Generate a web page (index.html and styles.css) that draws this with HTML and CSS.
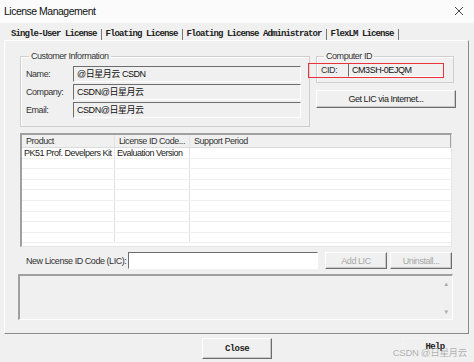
FILE: index.html
```html
<!DOCTYPE html>
<html lang="en">
    <head>
        <meta charset="UTF-8">
        <meta name="viewport" content="width=device-width, initial-scale=1.0">
        <title>License Management</title>
        <link rel="stylesheet" href="styles.css">
    </head>
    <body>
        <div class="window">
            <div class="titlebar">
                <span class="title">License Management</span>
                <svg class="close-x" width="10" height="10" viewBox="0 0 10 10">
                    <path d="M1 1 L9 9 M9 1 L1 9" stroke="#444" stroke-width="1" fill="none"/>
                </svg>
            </div>

            <div class="tabs">
                <span class="tab active">Single-User License</span>
                <span class="tab">Floating License</span>
                <span class="tab">Floating License Administrator</span>
                <span class="tab">FlexLM License</span>
            </div>

            <div class="panel">
                <div class="top-row">
                    <fieldset class="group customer">
                        <legend>Customer Information</legend>
                        <div class="form-grid">
                            <span class="label">Name:</span>
                            <div class="field">@日星月云 CSDN</div>
                            <span class="label">Company:</span>
                            <div class="field">CSDN@日星月云</div>
                            <span class="label">Email:</span>
                            <div class="field">CSDN@日星月云</div>
                        </div>
                    </fieldset>

                    <div class="side">
                        <fieldset class="group computer">
                            <legend>Computer ID</legend>
                            <div class="cid-row">
                                <span class="label">CID:</span>
                                <div class="field cid">CM3SH-0EJQM</div>
                            </div>
                            <!-- red annotation box drawn over the CID row -->
                            <div class="mark"></div>
                        </fieldset>
                        <button class="btn get-lic">Get LIC via Internet...</button>
                    </div>
                </div>

                <div class="list">
                    <div class="list-head">
                        <span class="col c1">Product</span>
                        <span class="col c2">License ID Code...</span>
                        <span class="col c3">Support Period</span>
                    </div>
                    <div class="list-row">
                        <span class="col c1">PK51 Prof. Develpers Kit</span>
                        <span class="col c2">Evaluation Version</span>
                        <span class="col c3"></span>
                    </div>
                    <div class="list-row"><span class="col c1"></span><span class="col c2"></span><span class="col c3"></span></div>
                    <div class="list-row"><span class="col c1"></span><span class="col c2"></span><span class="col c3"></span></div>
                    <div class="list-row"><span class="col c1"></span><span class="col c2"></span><span class="col c3"></span></div>
                    <div class="list-row"><span class="col c1"></span><span class="col c2"></span><span class="col c3"></span></div>
                    <div class="list-row"><span class="col c1"></span><span class="col c2"></span><span class="col c3"></span></div>
                    <div class="list-row"><span class="col c1"></span><span class="col c2"></span><span class="col c3"></span></div>
                    <div class="list-row"><span class="col c1"></span><span class="col c2"></span><span class="col c3"></span></div>
                    <div class="list-row"><span class="col c1"></span><span class="col c2"></span><span class="col c3"></span></div>
                </div>

                <div class="lic-row">
                    <span class="label">New License ID Code (LIC):</span>
                    <div class="field input"></div>
                    <button class="btn disabled add-lic">Add LIC</button>
                    <button class="btn disabled uninstall">Uninstall...</button>
                </div>

                <div class="notes">
                    <div class="scroll">
                        <span class="arrow">&#9650;</span>
                        <span class="arrow">&#9660;</span>
                    </div>
                </div>
            </div>

            <div class="footer">
                <button class="btn mono close">Close</button>
                <button class="btn mono flat help">Help</button>
            </div>

            <span class="watermark">CSDN @日星月云</span>
        </div>
    </body>
</html>
```

FILE: styles.css
```css
:root {
    --bg: #f0f0f0;
    --line: #a0a0a0;
    --dark: #6d6d6d;
    --sans: "Liberation Sans", "Noto Sans CJK SC", sans-serif;
    --mono: "Liberation Mono", monospace;
}
* {
    box-sizing: border-box;
}
body {
    margin: 0;
    width: 474px;
    height: 362px;
    overflow: hidden;
    background-color: var(--bg);
    font-family: var(--sans);
    font-size: 9px;
    letter-spacing: -0.45px;
    color: #222;
}
.window {
    position: relative;
    height: 362px;
}

/* title bar */
.titlebar {
    height: 23px;
    background-color: #fbfbfb;
    display: flex;
    align-items: center;
    justify-content: space-between;
    padding: 0 10px 2px 4px;
}
.title {
    font-size: 10.5px;
    letter-spacing: -0.5px;
    color: #111;
}

/* tabs */
.tabs {
    height: 17px;
    display: flex;
    align-items: flex-end;
    padding-left: 11px;
}
.tab {
    font-family: var(--mono);
    font-weight: bold;
    font-size: 9px;
    letter-spacing: -0.9px;
    color: #222;
    padding: 0 4px 1px 0;
    margin-right: 4px;
    border-right: 1px solid #777;
    line-height: 10px;
}

/* tab page */
.panel {
    height: 294px;
    margin: 0 5px 0 4px;
    border-top: 1px solid #fff;
    border-left: 1px solid #fff;
    border-right: 1px solid #8a8a8a;
    border-bottom: 1px solid #8a8a8a;
    padding: 9px 0 0 13px;
}
.top-row {
    display: flex;
    align-items: flex-start;
}
.group {
    margin: 0;
    padding: 0;
    min-width: 0;
    border: 1px solid #cfcfcf;
    box-shadow: inset 1px 1px 0 #fff;
}
.group legend {
    padding: 0 2px;
    margin-left: 3px;
    color: #333;
    line-height: 12px;
}
.customer {
    margin-left: 2px;
    width: 290px;
    height: 77px;
    padding: 0 8px 0 5px;
}
.form-grid {
    display: grid;
    grid-template-columns: 47px 1fr;
    grid-auto-rows: 16px;
    row-gap: 2px;
    align-items: center;
    padding-top: 4px;
}
.label {
    color: #333;
    white-space: nowrap;
}
.field {
    height: 16px;
    border-top: 1px solid var(--dark);
    border-left: 1px solid var(--dark);
    border-right: 1px solid #fff;
    border-bottom: 1px solid #fff;
    padding: 0 3px;
    line-height: 14px;
    color: #111;
    white-space: nowrap;
}

.side {
    margin-left: 6px;
    width: 140px;
    display: flex;
    flex-direction: column;
}
.computer {
    position: relative;
    width: 138px;
    height: 33px;
    padding: 0 9px 0 4px;
}
.cid-row {
    display: flex;
    align-items: center;
    margin-top: 1px;
}
.cid-row .label {
    width: 27px;
}
.field.cid {
    flex: 1;
    height: 14px;
    line-height: 12px;
}
.mark {
    position: absolute;
    left: -9px;
    top: 1px;
    width: 136px;
    height: 15px;
    border: 1.5px solid #e8333a;
}

/* buttons */
.btn {
    margin: 0;
    padding: 0;
    font-family: var(--sans);
    font-size: 9px;
    letter-spacing: -0.45px;
    color: #222;
    background-color: var(--bg);
    border-top: 1px solid #fff;
    border-left: 1px solid #fff;
    border-right: 1px solid var(--dark);
    border-bottom: 1px solid var(--dark);
    box-shadow: inset -1px -1px 0 #c8c8c8;
}
.btn.disabled {
    color: #a8a8a8;
}
.btn.mono {
    font-family: var(--mono);
    font-weight: bold;
    letter-spacing: -0.6px;
}
.btn.flat {
    border-color: #f3f3f3;
    box-shadow: none;
}
.get-lic {
    margin-top: 7px;
    width: 140px;
    height: 18px;
}

/* product list */
.list {
    margin: 6px 0 0 2px;
    width: 432px;
    height: 114px;
    background-color: #fff;
    border-top: 2px solid var(--line);
    border-left: 2px solid var(--line);
    border-right: 1px solid #e6e6e6;
    border-bottom: 1px solid #e6e6e6;
    overflow: hidden;
}
.list-head,
.list-row {
    display: flex;
}
.list-head {
    height: 13px;
    background-color: var(--bg);
    border-right: 1px solid var(--line);
    border-bottom: 1px solid #dcdcdc;
    line-height: 12px;
}
.list-row {
    height: 10.6px;
    border-bottom: 1px solid #efefef;
    line-height: 10px;
}
.col {
    padding-left: 4px;
    color: #222;
    white-space: nowrap;
    overflow: hidden;
}
.list-row .col {
    padding-left: 2px;
    letter-spacing: -0.5px;
}
.c1 {
    width: 93px;
    border-right: 1px solid #e2e2e2;
}
.c2 {
    width: 75px;
    border-right: 1px solid #e2e2e2;
}
.c3 {
    flex: 1;
}
.list-head .col {
    color: #333;
}
.list-row:first-of-type .col {
    padding-top: 1px;
}

/* new LIC row */
.lic-row {
    display: flex;
    align-items: center;
    margin: 5px 0 0 8px;
    height: 17px;
}
.lic-row .label {
    width: 102px;
}
.field.input {
    width: 190px;
    height: 17px;
    background-color: #fff;
}
.add-lic {
    margin-left: 7px;
    width: 62px;
    height: 17px;
}
.uninstall {
    margin-left: 3px;
    width: 62px;
    height: 17px;
}

/* notes box */
.notes {
    margin-top: 5px;
    width: 435px;
    height: 46px;
    border-top: 2px solid var(--line);
    border-left: 2px solid var(--line);
    border-right: 1px solid #fff;
    border-bottom: 1px solid #fff;
    display: flex;
    justify-content: flex-end;
}
.scroll {
    width: 12px;
    display: flex;
    flex-direction: column;
    justify-content: space-between;
    align-items: center;
    padding: 5px 0 3px;
}
.arrow {
    font-size: 6px;
    line-height: 7px;
    color: #a8a8a8;
}

/* bottom buttons */
.footer {
    display: flex;
    align-items: flex-start;
    padding: 4px 0 0 202px;
}
.close {
    width: 70px;
    height: 21px;
}
.help {
    margin-left: 130px;
    width: 66px;
    height: 21px;
    padding-bottom: 3px;
}
.watermark {
    position: absolute;
    right: 7px;
    bottom: 3px;
    font-size: 9.5px;
    letter-spacing: -0.3px;
    color: rgba(120, 120, 120, 0.55);
}
```
